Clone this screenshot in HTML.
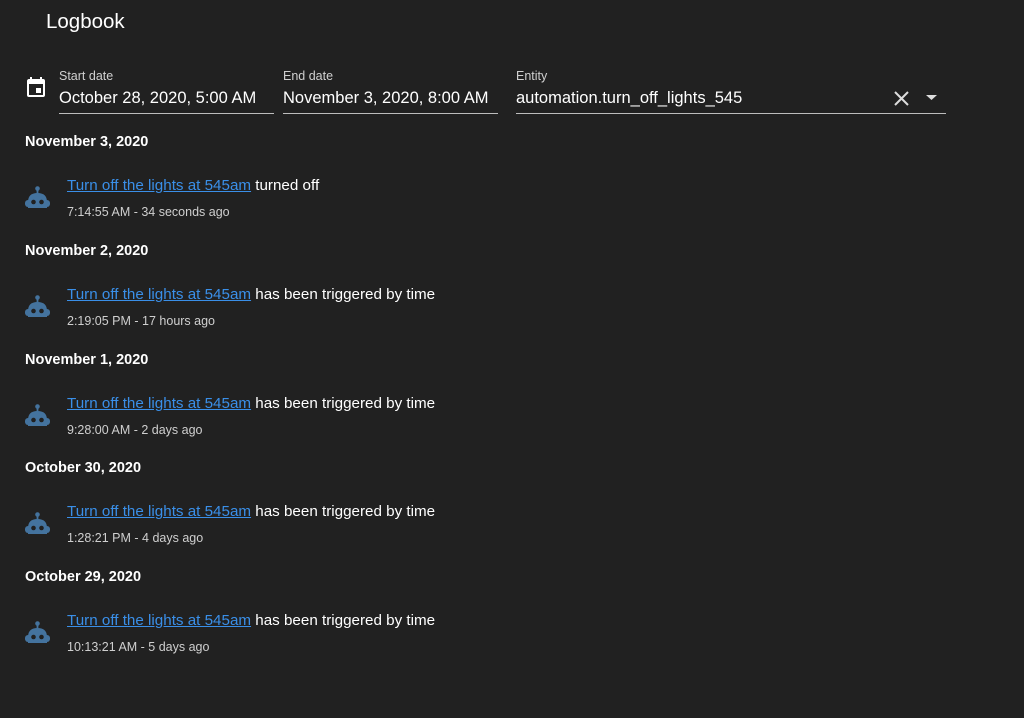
<!DOCTYPE html>
<html><head><style>
body{margin:0;background:#212121;width:1024px;height:718px;overflow:hidden;font-family:"Liberation Sans",sans-serif;color:#e1e1e1;position:relative}
.a{position:absolute;white-space:nowrap}
.lbl{font-size:12.5px;color:#d0d0d0}
.val{font-size:16.5px;color:#fff}
.line{position:absolute;height:1px;background:#bdbdbd}
.h{font-size:14.5px;font-weight:bold;color:#fff}
.t{font-size:15.2px;color:#fff}
.t a{color:#3a8fe8;text-decoration:underline}
.s{font-size:12.5px;color:#cfcfcf}
</style></head><body>
<div class="a" style="left:46px;top:10px;font-size:20.5px;color:#fff">Logbook</div>
<svg class="a" style="left:24px;top:76px" width="24" height="24" viewBox="0 0 24 24"><path fill="#fff" d="M19 19H5V8h14m-3-7v2H8V1H6v2H5c-1.11 0-2 .89-2 2v14a2 2 0 0 0 2 2h14a2 2 0 0 0 2-2V5a2 2 0 0 0-2-2h-1V1m-1 11h-5v5h5v-5z"/></svg>
<div class="a lbl" style="left:59px;top:69px">Start date</div>
<div class="a val" style="left:59px;top:89px">October 28, 2020, 5:00 AM</div>
<div class="line" style="left:59px;top:113px;width:215px"></div>
<div class="a lbl" style="left:283px;top:69px">End date</div>
<div class="a val" style="left:283px;top:89px">November 3, 2020, 8:00 AM</div>
<div class="line" style="left:283px;top:113px;width:215px"></div>
<div class="a lbl" style="left:516px;top:69px">Entity</div>
<div class="a val" style="left:516px;top:89px">automation.turn_off_lights_545</div>
<div class="line" style="left:516px;top:113px;width:430px"></div>
<svg class="a" style="left:893px;top:90px" width="17" height="17" viewBox="0 0 17 17"><path d="M2 2L15 15M15 2L2 15" stroke="#ddd" stroke-width="2"/></svg>
<svg class="a" style="left:926px;top:95px" width="11" height="6"><path d="M0 0H11L5.5 5z" fill="#ddd"/></svg>
<div id="c"></div>
<script>
var d=[["November 3, 2020","turned off","7:14:55 AM - 34 seconds ago"],["November 2, 2020","has been triggered by time","2:19:05 PM - 17 hours ago"],["November 1, 2020","has been triggered by time","9:28:00 AM - 2 days ago"],["October 30, 2020","has been triggered by time","1:28:21 PM - 4 days ago"],["October 29, 2020","has been triggered by time","10:13:21 AM - 5 days ago"]];
var h="";d.forEach(function(r,i){var y=i*108.8;
h+='<div class="a h" style="left:25px;top:'+(134+y)+'px">'+r[0]+'</div>';
h+='<svg class="a" style="left:24px;top:'+(186+y)+'px" width="27" height="25" viewBox="0 0 27 25"><circle cx="13.5" cy="2.5" r="2.3" fill="#44739e"/><rect x="12.6" y="3" width="1.8" height="5" fill="#44739e"/><path d="M4 16Q4 7 13.5 7Q23 7 23 16V22H4Z" fill="#44739e"/><rect x="1" y="14" width="25" height="7" rx="3" fill="#44739e"/><circle cx="9.5" cy="16" r="2.3" fill="#212121"/><circle cx="17.5" cy="16" r="2.3" fill="#212121"/></svg>';
h+='<div class="a t" style="left:67px;top:'+(177+y)+'px"><a>Turn off the lights at 545am</a> '+r[1]+'</div>';
h+='<div class="a s" style="left:67px;top:'+(205+y)+'px">'+r[2]+'</div>';});
document.getElementById("c").innerHTML=h;
</script>
</body></html>
